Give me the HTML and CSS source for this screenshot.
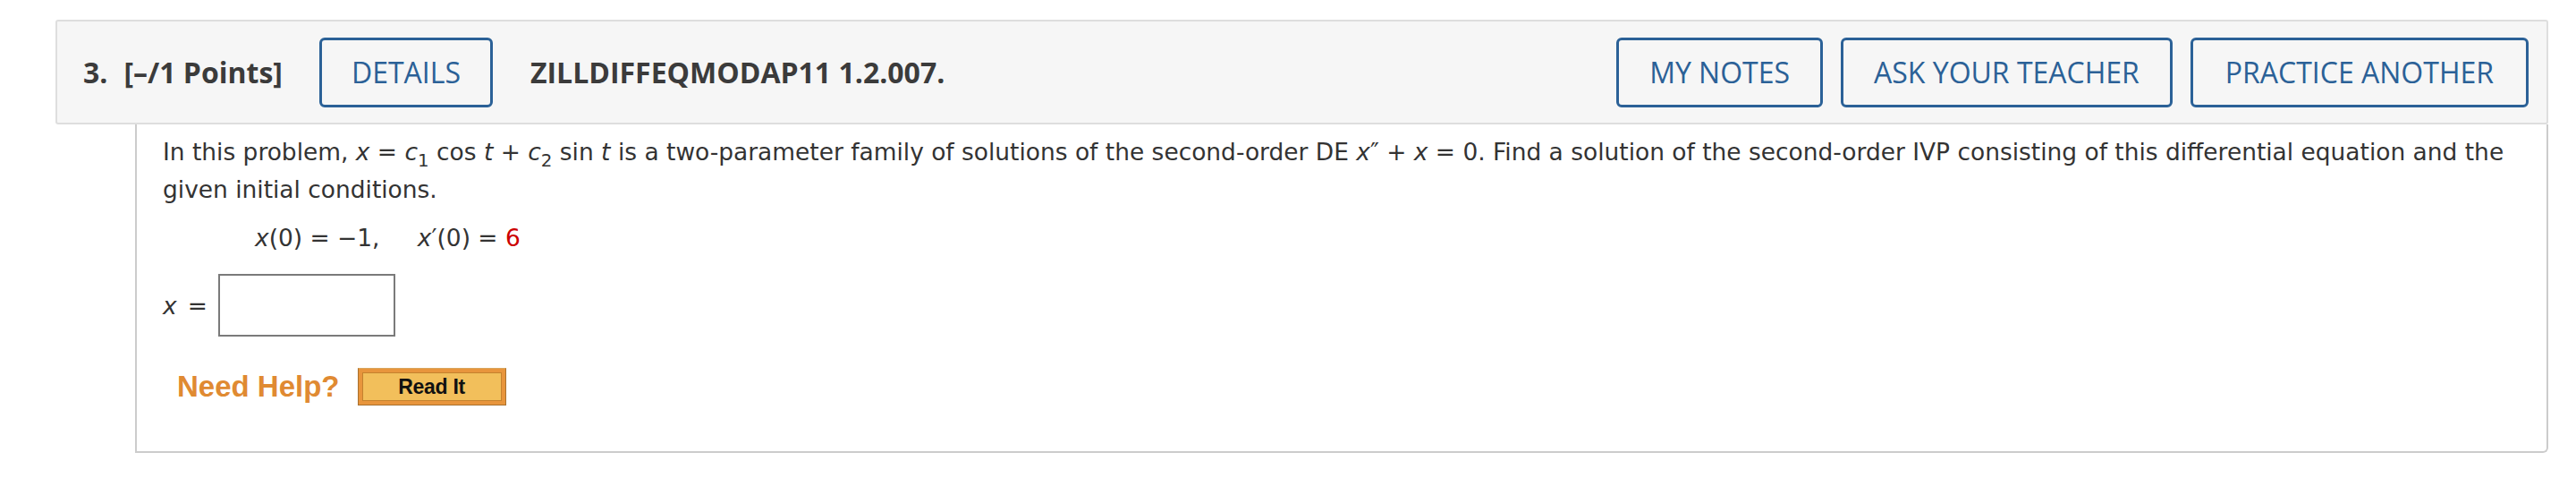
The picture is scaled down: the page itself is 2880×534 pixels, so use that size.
FILE: index.html
```html
<!DOCTYPE html>
<html>
<head>
<meta charset="utf-8">
<link rel="stylesheet" href="styles.css">
</head>
<body>
<div class="page">
  <div class="question">
    <div class="qhead">
      <span class="qnum">3.</span>
      <span class="qpts">[–/1 Points]</span>
      <button class="btn btn-details">DETAILS</button>
      <span class="qid">ZILLDIFFEQMODAP11 1.2.007.</span>
      <div class="actions">
        <button class="btn">MY NOTES</button>
        <button class="btn">ASK YOUR TEACHER</button>
        <button class="btn btn-wide">PRACTICE ANOTHER</button>
      </div>
    </div>
    <div class="qbody">
      <p class="prob">In this problem, <i>x</i> = <i>c</i><sub>1</sub> cos <i>t</i> + <i>c</i><sub>2</sub> sin <i>t</i> is a two-parameter family of solutions of the second-order DE <i>x</i>″ + <i>x</i> = 0. Find a solution of the second-order IVP consisting of this differential equation and the given initial conditions.</p>
      <p class="cond"><i>x</i>(0) = −1, <span class="sp"></span><i>x</i>′(0) = <span class="red">6</span></p>
      <div class="answer"><i>x</i> = <span class="input"></span></div>
      <div class="help">
        <span class="need">Need Help?</span>
        <span class="readit"><span class="readit-in">Read It</span></span>
      </div>
    </div>
  </div>
</div>
</body>
</html>
```

FILE: styles.css
```css
html, body {
  margin: 0;
  padding: 0;
  background: #ffffff;
}
.page {
  padding: 22px 0 0 62px;
}
.question {
  width: 2787px;
}
.qhead {
  box-sizing: border-box;
  height: 117px;
  display: flex;
  align-items: center;
  padding: 0 20px 0 29px;
  background: #f6f6f6;
  border: 2px solid #dedede;
  border-radius: 3px;
  font-family: "Open Sans", "Liberation Sans", sans-serif;
  color: #3b3b3b;
}
.qnum, .qpts, .qid {
  font-size: 32px;
  font-weight: 700;
}
.qnum {
  margin-right: 18px;
}
.qpts {
  margin-right: 41px;
}
.btn {
  box-sizing: border-box;
  height: 78px;
  padding: 0 34px;
  background: transparent;
  border: 3px solid #2b6197;
  border-radius: 6px;
  color: #2b6197;
  font-family: "Open Sans", "Liberation Sans", sans-serif;
  font-size: 32px;
  font-weight: 400;
  cursor: pointer;
}
.btn-details {
  padding: 0 33px;
  margin-right: 42px;
}
.btn-wide {
  padding: 0 36px;
}
.actions {
  margin-left: auto;
  display: flex;
  gap: 20px;
}
.qbody {
  margin-left: 89px;
  box-sizing: border-box;
  height: 367px;
  border: 2px solid #cccccc;
  border-top: none;
  border-radius: 0 0 6px 0;
  padding: 10px 30px 0 29px;
  font-family: "DejaVu Sans", Verdana, sans-serif;
  font-size: 26.45px;
  color: #333333;
}
.prob {
  margin: 0;
  line-height: 42px;
}
.prob sub {
  font-size: 75%;
  line-height: 0;
  vertical-align: -0.35em;
}
.cond {
  margin: 12px 0 0 103px;
  line-height: 42px;
}
.sp {
  display: inline-block;
  width: 34px;
}
.red {
  color: #cc0000;
}
.answer {
  display: flex;
  align-items: center;
  gap: 12px;
  margin-top: 19px;
}
.input {
  display: inline-block;
  box-sizing: border-box;
  width: 198px;
  height: 70px;
  border: 2px solid #7a7a7a;
  background: #fff;
}
.help {
  display: flex;
  align-items: center;
  margin: 35px 0 0 16px;
  gap: 20px;
}
.need {
  font-family: "Liberation Sans", Arial, sans-serif;
  font-weight: 700;
  font-size: 33px;
  color: #e08a32;
}
.readit {
  box-sizing: border-box;
  display: flex;
  width: 166px;
  height: 42px;
  padding: 4px;
  background: #e8953c;
  border: 1px solid #a8712f;
  border-top-color: #d9a65e;
}
.readit-in {
  flex: 1;
  display: flex;
  align-items: center;
  justify-content: center;
  background: #f2bf5b;
  border: 1px solid #c4822e;
  font-family: "Liberation Sans", Arial, sans-serif;
  font-weight: 700;
  font-size: 23px;
  letter-spacing: -0.3px;
  color: #111111;
}
```
